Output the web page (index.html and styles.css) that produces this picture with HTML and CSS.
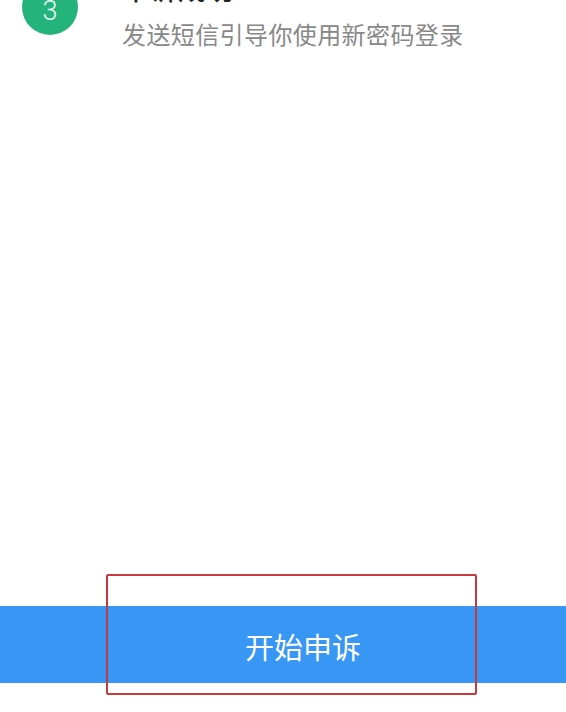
FILE: index.html
```html
<!DOCTYPE html>
<html lang="zh-CN">
<head>
<meta charset="utf-8">
<title>申诉</title>
<link rel="stylesheet" href="styles.css">
</head>
<body>
<div class="page">
  <div class="step">
    <div class="step-num">3</div>
    <div class="step-text">
      <div class="step-title">申诉成功</div>
      <div class="step-desc">发送短信引导你使用新密码登录</div>
    </div>
  </div>
  <div class="cta">
    <div class="cta-label">开始申诉</div>
    <div class="highlight"></div>
  </div>
</div>
</body>
</html>
```
FILE: styles.css
```css
html, body {
  margin: 0;
  padding: 0;
  background: #ffffff;
}
body {
  font-family: "Noto Sans CJK SC", "Noto Sans", "Liberation Sans", sans-serif;
  overflow: hidden;
}
.page {
  height: 712px;
  display: flex;
  flex-direction: column;
}
.step {
  display: flex;
  align-items: flex-start;
  gap: 44px;
  padding-left: 22px;
  margin-top: -21px;
}
.step-num {
  flex: none;
  width: 56px;
  height: 56px;
  border-radius: 50%;
  background: #24b47b;
  color: #eaf7f0;
  font-family: "Roboto", "Noto Sans", sans-serif;
  font-weight: 300;
  font-size: 27px;
  line-height: 27px;
  display: flex;
  justify-content: center;
  align-items: flex-end;
  box-sizing: border-box;
  padding-bottom: 10px;
}
.step-text {
  display: flex;
  flex-direction: column;
  margin-top: -8px;
}
.step-title {
  font-size: 28px;
  line-height: 34px;
  color: #222222;
  font-weight: 500;
}
.step-desc {
  font-size: 24px;
  line-height: 32px;
  letter-spacing: 0.4px;
  color: #888888;
  margin-top: 13px;
}
.cta {
  position: relative;
  margin-top: auto;
  margin-bottom: 29px;
  height: 77px;
  background: #3896f4;
  display: flex;
  align-items: center;
  justify-content: center;
}
.cta-label {
  color: #ffffff;
  font-size: 29px;
  line-height: 34px;
  padding-left: 40px;
  padding-top: 2px;
}
.highlight {
  position: absolute;
  left: 106px;
  top: -32px;
  width: 371px;
  height: 121px;
  box-sizing: border-box;
  border: 2px solid #c6393c;
  border-radius: 2px;
}
```
